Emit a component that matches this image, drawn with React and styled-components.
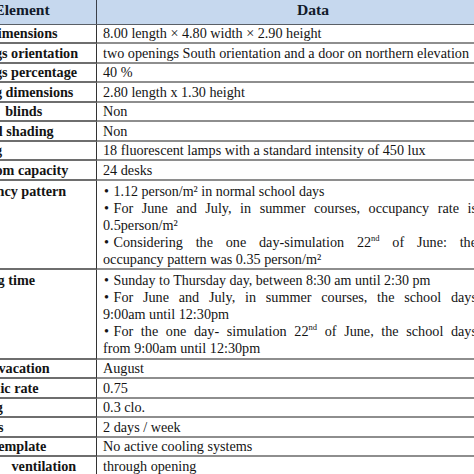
import styled, { createGlobalStyle } from "styled-components"

const GlobalStyle = createGlobalStyle`
    html, body {
        margin: 0;
        padding: 0;
        background: #ffffff;
        overflow: hidden;
    }
`

function App() {
    return (
        <>
            <GlobalStyle />
            <Table>
                <HeaderRow>
                    <HeaderCell $first>Element</HeaderCell>
                    <HeaderCell>Data</HeaderCell>
                </HeaderRow>

                <Row>
                    <Label>Room dimensions</Label>
                    <Value><Line>8.00 length × 4.80 width × 2.90 height</Line></Value>
                </Row>
                <Row>
                    <Label>Openings orientation</Label>
                    <Value><Line>two openings South orientation and a door on northern elevation</Line></Value>
                </Row>
                <Row>
                    <Label>Openings percentage</Label>
                    <Value><Line>40 %</Line></Value>
                </Row>
                <Row>
                    <Label>Opening dimensions</Label>
                    <Value><Line>2.80 length x 1.30 height</Line></Value>
                </Row>
                <Row>
                    <Label>Interior{"\u2002"}blinds</Label>
                    <Value><Line>Non</Line></Value>
                </Row>
                <Row>
                    <Label>External shading</Label>
                    <Value><Line>Non</Line></Value>
                </Row>
                <Row>
                    <Label>Lighting</Label>
                    <Value><Line>18 fluorescent lamps with a standard intensity of 450 lux</Line></Value>
                </Row>
                <Row>
                    <Label>Classroom capacity</Label>
                    <Value><Line>24 desks</Line></Value>
                </Row>

                <Row>
                    <Label $multi>Occupancy pattern</Label>
                    <Value $multi>
                        <Line $small><Bullet>•</Bullet>1.12 person/m² in normal school days</Line>
                        <Line $justify><Bullet>•</Bullet>For June and July, in summer courses, occupancy rate is</Line>
                        <Line>0.5person/m²</Line>
                        <Line $justify><Bullet>•</Bullet>Considering the one day-simulation 22<Sup>nd</Sup> of June: the</Line>
                        <Line>occupancy pattern was 0.35 person/m²</Line>
                    </Value>
                </Row>
                <Row>
                    <Label $multi>Teaching time</Label>
                    <Value $multi>
                        <Line $small><Bullet>•</Bullet>Sunday to Thursday day, between 8:30 am until 2:30 pm</Line>
                        <Line $justify><Bullet>•</Bullet>For June and July, in summer courses, the school days</Line>
                        <Line>9:00am until 12:30pm</Line>
                        <Line $justify><Bullet>•</Bullet>For the one day- simulation 22<Sup>nd</Sup> of June, the school days</Line>
                        <Line>from 9:00am until 12:30pm</Line>
                    </Value>
                </Row>

                <Row>
                    <Label>Annual vacation</Label>
                    <Value><Line>August</Line></Value>
                </Row>
                <Row>
                    <Label>Metabolic rate</Label>
                    <Value><Line>0.75</Line></Value>
                </Row>
                <Row>
                    <Label>Clothing</Label>
                    <Value><Line>0.3 clo.</Line></Value>
                </Row>
                <Row>
                    <Label>Holidays</Label>
                    <Value><Line>2 days / week</Line></Value>
                </Row>
                <Row>
                    <Label>HVAC template</Label>
                    <Value><Line>No active cooling systems</Line></Value>
                </Row>
                <Row>
                    <Label>Natural{"\u2003"}ventilation</Label>
                    <Value><Line>through opening</Line></Value>
                </Row>
            </Table>
        </>
    )
}

export default App

const Table = styled.div`
    margin-left: -52px;
    width: 581px;
    font-family: "Liberation Serif", "Times New Roman", serif;
    font-size: 14.2px;
    color: #141414;
`

const HeaderRow = styled.div`
    display: grid;
    grid-template-columns: 149px 432px;
    height: 24.5px;
    background-color: #c6d8ee;
    border-bottom: 1.5px solid #5a5f66;
    box-sizing: border-box;
`

const HeaderCell = styled.div`
    display: flex;
    align-items: center;
    justify-content: center;
    padding-bottom: 3px;
    font-weight: bold;
    font-size: 15.6px;
    color: #111a2a;
    border-right: ${p => p.$first ? "1px solid #3a3f48" : "none"};
`

const Row = styled.div`
    display: grid;
    grid-template-columns: 149px 432px;
`

const Label = styled.div`
    padding: ${p => p.$multi ? "2px" : "0.5px"} 5px 0 2px;
    line-height: 17px;
    font-weight: bold;
    white-space: nowrap;
    border-right: 1px solid #333;
    border-bottom: 2px solid #6e6e6e;
`

const Value = styled.div`
    padding: ${p => p.$multi ? "2px 52px 0.5px 6px" : "0.5px 52px 0 6px"};
    border-bottom: 2px solid #8e8e8e;
`

const Line = styled.div`
    line-height: 17px;
    white-space: nowrap;
    font-size: ${p => p.$small ? "14px" : "inherit"};
    text-align: ${p => p.$justify ? "justify" : "left"};
    text-align-last: ${p => p.$justify ? "justify" : "auto"};
`

const Bullet = styled.span`
    display: inline-block;
    width: 9.5px;
    padding-left: 1px;
    line-height: inherit;
    font-size: inherit;
`

const Sup = styled.sup`
    font-size: 8.5px;
    line-height: 0;
    vertical-align: 6px;
`
